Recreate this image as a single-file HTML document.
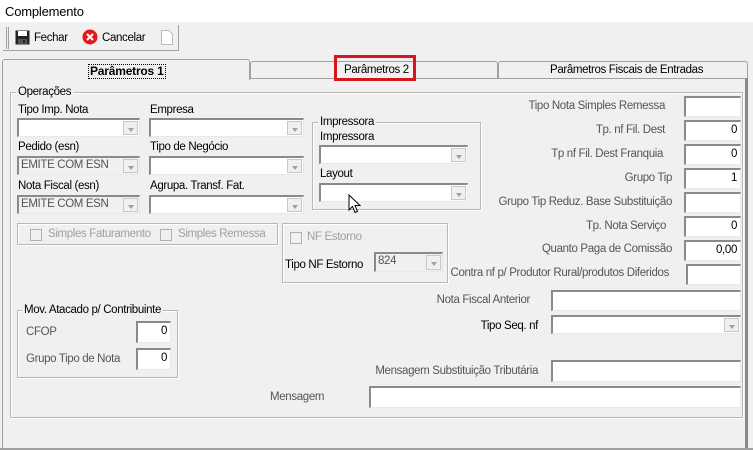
<!DOCTYPE html>
<html><head><meta charset="utf-8"><style>
*{margin:0;padding:0;box-sizing:border-box}
body{width:753px;height:450px;background:#f0f0f0;font-family:"Liberation Sans",sans-serif;font-size:11.5px;letter-spacing:-0.35px;color:#000;position:relative;overflow:hidden}
div,span{position:absolute}
.t{white-space:nowrap;line-height:13px}
.g{color:#555}
.d{color:#a0a0a0}
.in{background:#fff;border-top:2px solid #8a8a8a;border-left:2px solid #8a8a8a;border-bottom:1px solid #e8e8e8;border-right:1px solid #e8e8e8;text-align:right;padding-right:3px;line-height:16px}
.cb{background:#fff;border-top:2px solid #8a8a8a;border-left:2px solid #8a8a8a;border-bottom:1px solid #e8e8e8;border-right:1px solid #e8e8e8;padding-left:2px;line-height:15px}
.cb.dis{background:#f0f0f0;color:#555}
.cb i{position:absolute;right:1px;top:1px;bottom:1px;width:15px;background:#f0f0f0;border:1px solid #c8c8c8}
.cb i:after{content:"";position:absolute;left:4px;top:6px;border-left:3px solid transparent;border-right:3px solid transparent;border-top:4px solid #a0a0a0}
.grp{border:1px solid #b8b8b8;box-shadow:inset 1px 1px 0 #fff,1px 1px 0 #fff}
.lg{background:#f0f0f0;padding:0 2px;line-height:13px;white-space:nowrap}
.chk{width:12px;height:12px;border:1px solid #b0b0b0;background:#f0f0f0}
</style></head><body>
<div style="left:0;top:0;width:753px;height:22px;background:#fff"></div>
<div class="t" style="left:5px;top:5px;font-size:13px;letter-spacing:-0.2px">Complemento</div>
<!-- toolbar -->
<div style="left:3px;top:25px;width:176px;height:26px;border-right:1px solid #a0a0a0;border-bottom:1px solid #a0a0a0"></div>
<div style="left:6px;top:27px;width:3px;height:22px;border-left:1px solid #a0a0a0;border-right:1px solid #a0a0a0"></div>
<svg style="position:absolute;left:15px;top:30px" width="15" height="15" viewBox="0 0 15 15"><rect x="0.5" y="0.5" width="14" height="14" fill="#222"/><rect x="3" y="1" width="9" height="5" fill="#fff"/><rect x="3" y="9" width="9" height="5" fill="#555"/><rect x="8" y="10" width="2" height="3" fill="#222"/></svg>
<div class="t" style="left:34px;top:32px">Fechar</div>
<svg style="position:absolute;left:82px;top:29px" width="16" height="16"><circle cx="8" cy="8" r="7.5" fill="#e31818"/><path d="M5 5L11 11M11 5L5 11" stroke="#fff" stroke-width="2"/></svg>
<div class="t" style="left:102px;top:32px">Cancelar</div>
<svg style="position:absolute;left:161px;top:30px" width="12" height="15"><path d="M0.5 0.5H8L11.5 4V14.5H0.5Z" fill="#fff" stroke="#bbb"/></svg>
<!-- tabs -->
<div style="left:250px;top:61px;width:248px;height:18px;border:1px solid #a0a0a0;border-bottom:none;background:#f0f0f0;border-radius:3px 3px 0 0"></div>
<div style="left:498px;top:61px;width:250px;height:18px;border:1px solid #a0a0a0;border-bottom:none;background:#f0f0f0;border-radius:3px 3px 0 0"></div>
<div style="left:2px;top:78px;width:746px;height:372px;border-top:1px solid #a0a0a0;border-left:1px solid #a0a0a0;border-right:3px solid #888"></div>
<div style="left:2px;top:59px;width:248px;height:21px;border:1px solid #a0a0a0;border-bottom:none;background:#f0f0f0;border-radius:3px 3px 0 0"></div>
<div class="t" style="left:88px;top:64px;font-weight:bold;border:1px dotted #000;padding:0 1px;font-size:12px;letter-spacing:-0.2px">Parâmetros 1</div>
<div class="t" style="left:344px;top:64px">Parâmetros 2</div>
<div style="left:334px;top:55px;width:82px;height:26px;border:3px solid #d8141c"></div>
<div class="t" style="left:550px;top:64px">Parâmetros Fiscais de Entradas</div>
<div style="left:0;top:448px;width:753px;height:2px;background:#a0a0a0"></div>
<!-- Operações group -->
<div class="grp" style="left:10px;top:92px;width:733px;height:326px"></div>
<div class="lg" style="left:16px;top:86px">Operações</div>
<div class="t" style="left:18px;top:104px">Tipo Imp. Nota</div>
<div class="t" style="left:150px;top:104px">Empresa</div>
<div class="cb" style="left:17px;top:118px;width:123px;height:19px"><i></i></div>
<div class="cb" style="left:149px;top:118px;width:155px;height:19px"><i></i></div>
<div class="t" style="left:18px;top:141px">Pedido (esn)</div>
<div class="t" style="left:150px;top:141px">Tipo de Negócio</div>
<div class="cb dis" style="left:17px;top:156px;width:123px;height:19px">EMITE COM ESN<i></i></div>
<div class="cb" style="left:149px;top:156px;width:155px;height:19px"><i></i></div>
<div class="t" style="left:18px;top:180px">Nota Fiscal (esn)</div>
<div class="t" style="left:150px;top:180px">Agrupa. Transf. Fat.</div>
<div class="cb dis" style="left:17px;top:195px;width:123px;height:19px">EMITE COM ESN<i></i></div>
<div class="cb" style="left:149px;top:195px;width:155px;height:19px"><i></i></div>
<!-- Impressora -->
<div class="grp" style="left:312px;top:122px;width:169px;height:88px"></div>
<div class="lg" style="left:318px;top:116px">Impressora</div>
<div class="t" style="left:320px;top:131px">Impressora</div>
<div class="cb" style="left:319px;top:145px;width:149px;height:19px"><i></i></div>
<div class="t" style="left:320px;top:168px">Layout</div>
<div class="cb" style="left:319px;top:183px;width:149px;height:19px"><i></i></div>
<svg style="position:absolute;left:348px;top:194px" width="14" height="20"><path d="M1 1V16L4.5 12.5L7 18.5L9.5 17.5L7 11.5H12Z" fill="#fff" stroke="#000" stroke-width="1"/></svg>
<!-- simples -->
<div class="grp" style="left:17px;top:223px;width:261px;height:22px"></div>
<div class="chk" style="left:30px;top:229px"></div>
<div class="t d" style="left:48px;top:228px">Simples Faturamento</div>
<div class="chk" style="left:160px;top:229px"></div>
<div class="t d" style="left:178px;top:228px">Simples Remessa</div>
<!-- NF Estorno -->
<div class="grp" style="left:282px;top:223px;width:166px;height:60px"></div>
<div class="chk" style="left:290px;top:232px"></div>
<div class="t d" style="left:307px;top:231px">NF Estorno</div>
<div class="t" style="left:285px;top:259px">Tipo NF Estorno</div>
<div class="cb dis" style="left:374px;top:252px;width:69px;height:20px">824<i></i></div>
<!-- right fields -->
<div class="t g" style="right:88px;top:100px">Tipo Nota Simples Remessa</div>
<div class="in" style="left:684px;top:96px;width:57px;height:21px"></div>
<div class="t g" style="right:88px;top:124px">Tp. nf Fil. Dest</div>
<div class="in" style="left:684px;top:120px;width:57px;height:21px">0</div>
<div class="t g" style="right:90px;top:148px">Tp nf Fil. Dest Franquia</div>
<div class="in" style="left:684px;top:144px;width:57px;height:21px">0</div>
<div class="t g" style="right:81px;top:172px">Grupo Tip</div>
<div class="in" style="left:684px;top:168px;width:57px;height:21px">1</div>
<div class="t g" style="right:81px;top:196px">Grupo Tip Reduz. Base Substituição</div>
<div class="in" style="left:684px;top:192px;width:57px;height:21px"></div>
<div class="t g" style="right:87px;top:220px">Tp. Nota Serviço</div>
<div class="in" style="left:684px;top:216px;width:57px;height:21px">0</div>
<div class="t g" style="right:81px;top:243px">Quanto Paga de Comissão</div>
<div class="in" style="left:684px;top:240px;width:57px;height:21px">0,00</div>
<div class="t g" style="right:84px;top:267px">Contra nf p/ Produtor Rural/produtos Diferidos</div>
<div class="in" style="left:686px;top:264px;width:55px;height:21px"></div>
<div class="t g" style="right:223px;top:294px">Nota Fiscal Anterior</div>
<div class="in" style="left:551px;top:290px;width:190px;height:21px"></div>
<div class="t" style="right:215px;top:320px">Tipo Seq. nf</div>
<div class="cb" style="left:551px;top:315px;width:190px;height:19px"><i></i></div>
<div class="t g" style="right:215px;top:365px">Mensagem Substituição Tributária</div>
<div class="in" style="left:551px;top:360px;width:190px;height:22px"></div>
<div class="t g" style="left:270px;top:391px">Mensagem</div>
<div class="in" style="left:369px;top:386px;width:372px;height:22px"></div>
<!-- Mov. Atacado -->
<div class="grp" style="left:17px;top:310px;width:161px;height:68px"></div>
<div class="lg" style="left:22px;top:304px">Mov. Atacado p/ Contribuinte</div>
<div class="t g" style="left:26px;top:326px">CFOP</div>
<div class="in" style="left:136px;top:321px;width:35px;height:22px">0</div>
<div class="t g" style="left:26px;top:353px">Grupo Tipo de Nota</div>
<div class="in" style="left:136px;top:348px;width:35px;height:22px">0</div>
</body></html>
